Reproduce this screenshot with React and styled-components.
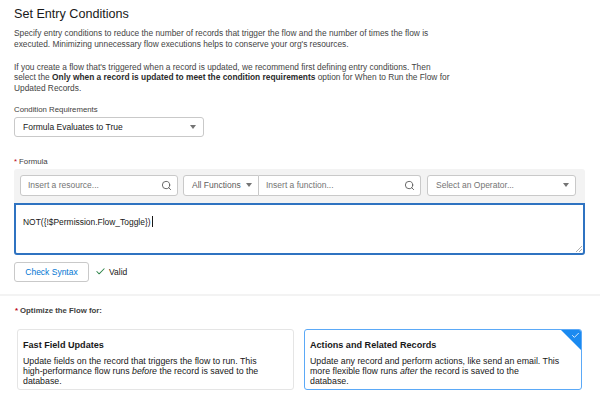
import styled, { createGlobalStyle } from "styled-components";
import { Search, Check } from "lucide-react";

const GlobalStyle = createGlobalStyle`
    body {
        margin: 0;
        background: #ffffff;
        font-family: "Liberation Sans", Arial, sans-serif;
        color: #3e3e3c;
    }
`

const Page = styled.div`
    width: 600px;
    height: 399px;
    overflow: hidden;
    padding-top: 6px;
    box-sizing: border-box;
`

const Section = styled.div`
    padding: 0 14px;
`

const Title = styled.h1`
    margin: 0;
    font-size: 12.6px;
    line-height: 16px;
    font-weight: 400;
    color: #181818;
`

const Paragraph = styled.p`
    margin: ${(props) => props.$top || 0}px 0 0;
    white-space: nowrap;
    font-size: 8.35px;
    line-height: 10.8px;
    color: #444444;

    b {
        color: #2b2b2b;
    }
`

const Label = styled.div`
    margin-top: ${(props) => props.$top || 0}px;
    font-size: 7.8px;
    line-height: 10px;
    color: #3e3e3c;
    font-weight: ${(props) => (props.$bold ? 700 : 400)};
    padding-left: ${(props) => props.$indent || 0}px;
`

const Required = styled.span`
    color: #ba0517;
    margin-right: 2px;
`

const Select = styled.div`
    margin-top: 2px;
    width: 190px;
    height: 20px;
    box-sizing: border-box;
    border: 1px solid #c9c9c9;
    border-radius: 3px;
    display: flex;
    align-items: center;
    justify-content: space-between;
    padding: 0 7px 0 8px;
    font-size: 8.5px;
    color: #181818;
`

const Caret = styled.span`
    width: 0;
    height: 0;
    border-left: 3.5px solid transparent;
    border-right: 3.5px solid transparent;
    border-top: 4px solid #747474;
`

const Toolbar = styled.div`
    margin-top: 2px;
    width: 571px;
    height: 34px;
    box-sizing: border-box;
    background: #f3f3f3;
    border-radius: 3px 3px 0 0;
    padding: 6px 8px 0 6px;
    display: flex;
    gap: 5px;
`

const Field = styled.div`
    height: 21px;
    width: ${(props) => props.$width}px;
    box-sizing: border-box;
    background: #ffffff;
    border: 1px solid #c9c9c9;
    border-radius: ${(props) => props.$radius || "3px"};
    border-left-width: ${(props) => (props.$joined ? 0 : 1)}px;
    display: flex;
    align-items: center;
    justify-content: space-between;
    padding: ${(props) => props.$pad || "0 5px 0 7px"};
    margin-left: ${(props) => props.$shift || 0}px;
    font-size: 8.5px;
    color: ${(props) => (props.$dim ? "#747474" : "#5c5c5c")};
`

const Group = styled.div`
    display: flex;
`

const FormulaBox = styled.div`
    position: relative;
    width: 571px;
    height: 52px;
    box-sizing: border-box;
    border: 2px solid #2f73c1;
    border-radius: 0 0 3px 3px;
    padding: 11px 7px;
    font-size: 8.45px;
    color: #181818;
`

const TextCursor = styled.span`
    display: inline-block;
    width: 1px;
    height: 11px;
    background: #181818;
    vertical-align: -2px;
    margin-left: 1px;
`

const Grip = styled.svg`
    position: absolute;
    right: 1px;
    bottom: 1px;
`

const SyntaxRow = styled.div`
    margin-top: 7px;
    display: flex;
    align-items: center;
    gap: 6px;
`

const Button = styled.button`
    width: 75px;
    height: 20px;
    border: 1px solid #c9c9c9;
    border-radius: 3px;
    background: #ffffff;
    color: #0176d3;
    font-family: "Liberation Sans", Arial, sans-serif;
    font-size: 8.5px;
    padding: 0;
`

const Valid = styled.span`
    display: flex;
    align-items: center;
    gap: 3px;
    font-size: 8.5px;
    color: #181818;
`

const Divider = styled.div`
    margin-top: 12px;
    height: 2px;
    background: #f3f3f3;
`

const Cards = styled.div`
    margin-top: 13px;
    padding-left: 3px;
    display: flex;
    gap: 10px;
`

const Card = styled.div`
    position: relative;
    width: ${(props) => props.$width}px;
    height: 61px;
    box-sizing: border-box;
    border: ${(props) => (props.$selected ? "1.5px solid #5ba9f7" : "1px solid #e5e5e5")};
    border-radius: 3px;
    padding: 10px 6px 0 5px;
    overflow: hidden;
`

const CardTitle = styled.div`
    font-size: 9.1px;
    line-height: 11px;
    font-weight: 700;
    color: #181818;
`

const CardText = styled.div`
    margin-top: 6.5px;
    white-space: nowrap;
    font-size: 8.8px;
    line-height: 9.7px;
    color: #181818;
`

const Corner = styled.div`
    position: absolute;
    top: 0;
    right: 0;
    width: 0;
    height: 0;
    border-top: 20px solid #1b8af0;
    border-left: 20px solid transparent;
`

const CornerCheck = styled(Check)`
    position: absolute;
    top: 1px;
    right: 1px;
`

const CARDS = [
    {
        title: "Fast Field Updates",
        lines: ["Update fields on the record that triggers the flow to run. This", "high-performance flow runs "],
        when: "before",
        width: 277,
    },
    {
        title: "Actions and Related Records",
        lines: ["Update any record and perform actions, like send an email. This", "more flexible flow runs "],
        when: "after",
        width: 278,
        selected: true,
    },
]

const App = () => {
    return (
        <Page>
            <GlobalStyle />
            <Section>
                <Title>Set Entry Conditions</Title>
                <Paragraph $top={6}>
                    Specify entry conditions to reduce the number of records that trigger the flow and the number of times the flow is<br />
                    executed. Minimizing unnecessary flow executions helps to conserve your org's resources.
                </Paragraph>
                <Paragraph $top={12}>
                    If you create a flow that's triggered when a record is updated, we recommend first defining entry conditions. Then<br />
                    select the <b>Only when a record is updated to meet the condition requirements</b> option for When to Run the Flow for<br />
                    Updated Records.
                </Paragraph>

                <Label $top={11}>Condition Requirements</Label>
                <Select>
                    Formula Evaluates to True
                    <Caret />
                </Select>

                <Label $top={20}><Required>*</Required>Formula</Label>
                <Toolbar>
                    <Field $width={158} $dim>
                        Insert a resource...
                        <Search size={11} color="#5c5c5c" strokeWidth={2} />
                    </Field>
                    <Group>
                        <Field $width={76} $radius="3px 0 0 3px" $pad="0 6px 0 8px">
                            All Functions
                            <Caret />
                        </Field>
                        <Field $width={162} $radius="0 3px 3px 0" $joined $dim>
                            Insert a function...
                            <Search size={11} color="#5c5c5c" strokeWidth={2} />
                        </Field>
                    </Group>
                    <Field $width={149} $dim $pad="0 6px 0 8px" $shift={1}>
                        Select an Operator...
                        <Caret />
                    </Field>
                </Toolbar>
                <FormulaBox>
                    NOT({"{!$Permission.Flow_Toggle}"})<TextCursor />
                    <Grip width="6" height="6" viewBox="0 0 6 6">
                        <path d="M6 0 L0 6 M6 3 L3 6" stroke="#9a9a9a" strokeWidth="0.8" />
                    </Grip>
                </FormulaBox>

                <SyntaxRow>
                    <Button>Check Syntax</Button>
                    <Valid>
                        <Check size={11} color="#2e844a" strokeWidth={2.2} />
                        Valid
                    </Valid>
                </SyntaxRow>
            </Section>

            <Divider />

            <Section>
                <Label $top={10} $bold $indent={1}><Required>*</Required>Optimize the Flow for:</Label>
                <Cards>
                    {CARDS.map((card) => (
                        <Card key={card.title} $width={card.width} $selected={card.selected}>
                            {card.selected && (
                                <>
                                    <Corner />
                                    <CornerCheck size={9} color="#ffffff" strokeWidth={2.2} />
                                </>
                            )}
                            <CardTitle>{card.title}</CardTitle>
                            <CardText>
                                {card.lines[0]}<br />
                                {card.lines[1]}<i>{card.when}</i> the record is saved to the<br />
                                database.
                            </CardText>
                        </Card>
                    ))}
                </Cards>
            </Section>
        </Page>
    )
}

export default App
